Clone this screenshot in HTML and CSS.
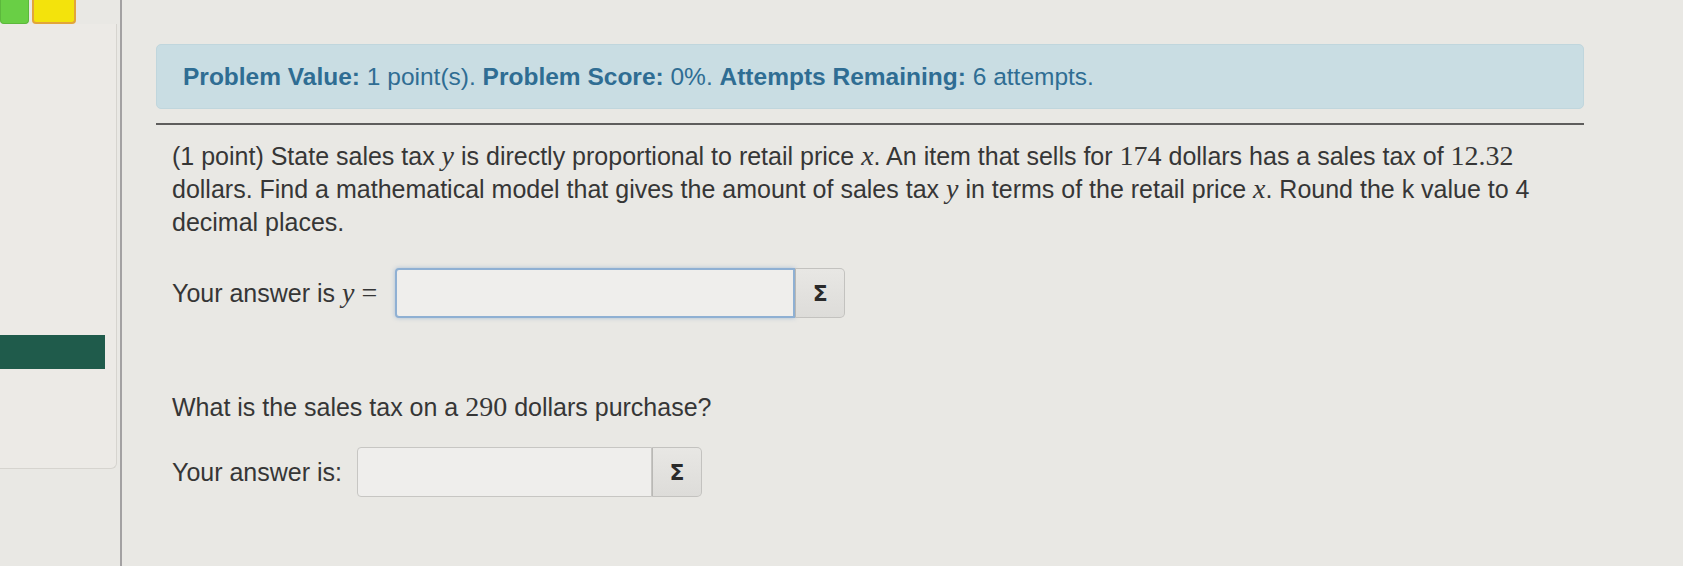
FILE: index.html
```html
<!DOCTYPE html>
<html>
<head>
<meta charset="utf-8">
<link rel="stylesheet" href="styles.css">
</head>
<body>
<div class="page">
  <aside class="sidebar">
    <div class="squares">
      <span class="sq sq-green"></span>
      <span class="sq sq-yellow"></span>
    </div>
    <div class="panel">
      <div class="panel-bar"></div>
    </div>
  </aside>
  <main class="main">
    <div class="alert">
      <span class="alert-text"><b>Problem Value:</b> 1 point(s). <b>Problem Score:</b> 0%. <b>Attempts Remaining:</b> 6 attempts.</span>
    </div>
    <hr class="rule">
    <div class="problem">
      <p class="text">(1 point) State sales tax <i class="m">y</i> is directly proportional to retail price <i class="m">x</i>. An item that sells for <span class="n">174</span> dollars has a sales tax of <span class="n">12.32</span> dollars. Find a mathematical model that gives the amount of sales tax <i class="m">y</i> in terms of the retail price <i class="m">x</i>. Round the k value to 4 decimal places.</p>
      <div class="answer-row row1">
        <span class="label">Your answer is <i class="m">y</i> <span class="eq">=</span></span>
        <div class="field">
          <span class="input focus wide"></span>
          <span class="sigma">Σ</span>
        </div>
      </div>
      <p class="text q2">What is the sales tax on a <span class="n">290</span> dollars purchase?</p>
      <div class="answer-row row2">
        <span class="label">Your answer is:</span>
        <div class="field">
          <span class="input narrow"></span>
          <span class="sigma">Σ</span>
        </div>
      </div>
    </div>
  </main>
</div>
</body>
</html>
```

FILE: styles.css
```css
html, body {
  margin: 0;
  padding: 0;
}
body {
  background: #e9e8e4;
  font-family: "Liberation Sans", Arial, sans-serif;
  color: #363636;
  width: 1683px;
  height: 566px;
  overflow: hidden;
}
.page {
  display: flex;
  height: 566px;
}
.sidebar {
  width: 120px;
  flex: none;
  border-right: 2px solid #a3a1a2;
  display: flex;
  flex-direction: column;
}
.squares {
  display: flex;
  gap: 3px;
  height: 24px;
}
.sq {
  display: block;
  height: 24px;
  border-radius: 0 0 4px 4px;
  box-sizing: border-box;
}
.sq-green {
  width: 29px;
  background: #69cf45;
  border: 1px solid #5cb83c;
  border-top: none;
}
.sq-yellow {
  width: 44px;
  background: #f3e30c;
  border: 2px solid #e2a53a;
  border-top: none;
}
.panel {
  height: 445px;
  margin-right: 3px;
  background: #eceae6;
  border-bottom: 1px solid #d6d4cf;
  border-right: 1px solid #d6d4cf;
  border-radius: 0 0 6px 0;
  padding-top: 311px;
  box-sizing: border-box;
}
.panel-bar {
  width: 105px;
  height: 34px;
  background: #1f5b4b;
}
.main {
  flex: 1;
  padding: 44px 0 0 34px;
}
.alert {
  width: 1428px;
  box-sizing: border-box;
  height: 65px;
  padding: 0 26px;
  background: #c9dde3;
  border: 1px solid #c0d6dd;
  border-radius: 5px;
  color: #2f6d93;
  font-size: 24.5px;
  line-height: 63px;
  white-space: nowrap;
}
.alert b {
  font-weight: bold;
}
.rule {
  width: 1428px;
  margin: 14px 0 0 0;
  border: none;
  border-top: 2px solid #5e5d5c;
  height: 0;
}
.problem {
  width: 1400px;
  padding: 15px 0 0 16px;
}
.text {
  margin: 0;
  font-size: 25px;
  line-height: 33px;
}
.m, .n, .eq {
  font-family: "Liberation Serif", "Times New Roman", serif;
  font-size: 28px;
  line-height: 1;
}
.m {
  font-style: italic;
}
.answer-row {
  display: flex;
  align-items: center;
  font-size: 25px;
}
.row1 {
  margin-top: 29px;
  gap: 18px;
}
.row2 {
  margin-top: 23px;
  gap: 15px;
}
.q2 {
  margin-top: 73px;
}
.field {
  display: flex;
  height: 50px;
}
.input {
  display: block;
  box-sizing: border-box;
  height: 50px;
  background: #efeeec;
  border: 1px solid #c7c6c3;
  border-radius: 4px 0 0 4px;
}
.input.focus {
  border: 2px solid #8fb0d3;
  box-shadow: 0 0 4px rgba(110, 150, 200, 0.5);
}
.wide { width: 400px; }
.narrow { width: 295px; }
.sigma {
  display: flex;
  align-items: center;
  justify-content: center;
  box-sizing: border-box;
  width: 50px;
  height: 50px;
  background: linear-gradient(#e8e7e4, #dddcd9);
  border: 1px solid #c3c2bf;
  border-left: 1px solid #b9b8b5;
  border-radius: 0 5px 5px 0;
  font-family: "DejaVu Sans", sans-serif;
  font-weight: bold;
  font-size: 22px;
  color: #2a2a2a;
}
```
